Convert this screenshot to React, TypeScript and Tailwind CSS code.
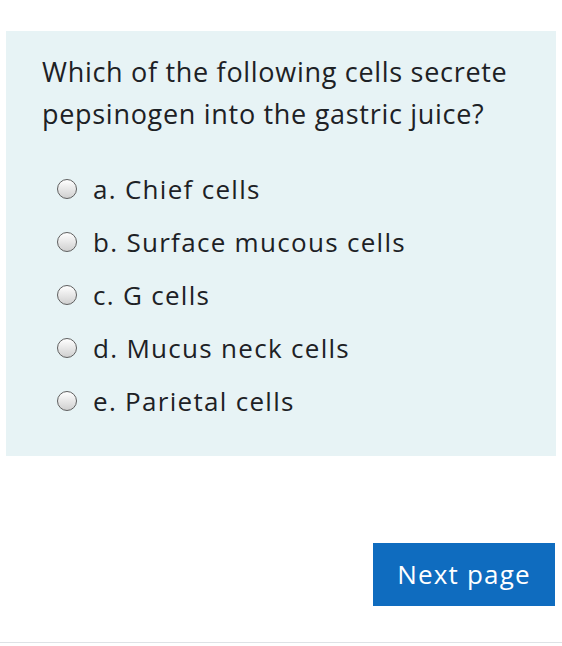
const OPTIONS = [
  "a. Chief cells",
  "b. Surface mucous cells",
  "c. G cells",
  "d. Mucus neck cells",
  "e. Parietal cells",
];

export default function App() {
  return (
    <div
      className="relative h-[646px] w-[562px] bg-white text-[#1d2125]"
      style={{ fontFamily: '"Open Sans", "Noto Sans", sans-serif' }}
    >
      <div className="h-[31px]" />
      <div className="mx-[6px] h-[425px] bg-[#e7f3f5] pl-[36px] pr-[8px] pt-[20px]">
        <p className="text-[27px] leading-[42px] tracking-[0.7px]">
          Which of the following cells secrete pepsinogen into the gastric juice?
        </p>
        <div className="mt-[36px] flex flex-col gap-[17px]">
          {OPTIONS.map((label) => (
            <label key={label} className="flex h-[36px] items-center">
              <span className="ml-[15px] h-[20px] w-[20px] rounded-full border-[1.5px] border-[#5f5f5f] bg-gradient-to-b from-white to-[#d0d0d0]" />
              <span className="ml-[16px] text-[26px] leading-[36px] tracking-[1.3px]">{label}</span>
            </label>
          ))}
        </div>
      </div>
      <div className="flex justify-end pr-[7px] pt-[87px]">
        <button
          type="button"
          className="h-[63px] w-[182px] bg-[#0f6cbf] text-[26px] tracking-[1.2px] text-white"
        >
          Next page
        </button>
      </div>
      <div className="absolute bottom-[3px] left-0 h-px w-full bg-[#dee2e6]" />
    </div>
  );
}
